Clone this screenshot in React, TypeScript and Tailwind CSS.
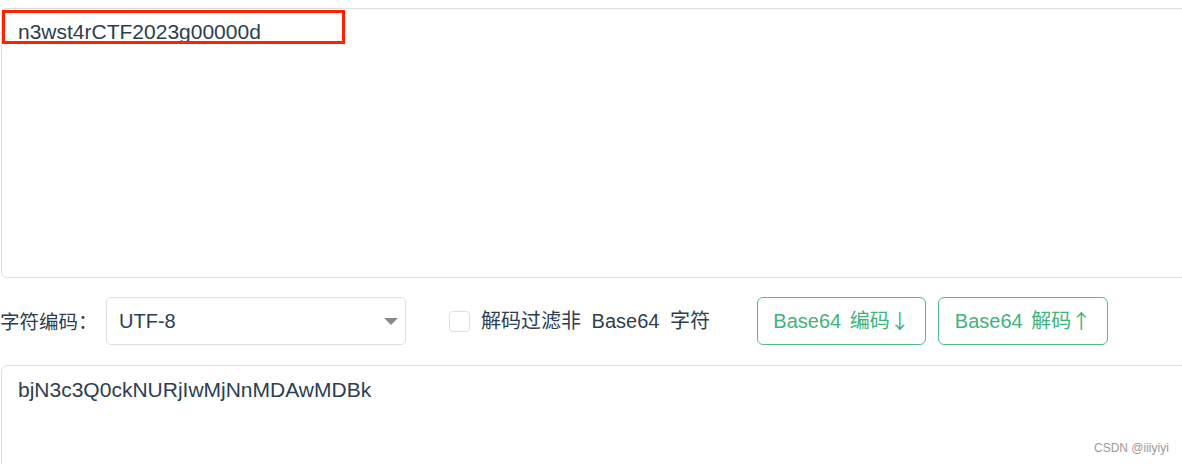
import React from "react";

export default function App() {
  const sans = { fontFamily: '"Liberation Sans", Arial, "Noto Sans CJK SC", sans-serif' };
  const cjk = { fontFamily: '"Noto Sans CJK SC", "Liberation Sans", sans-serif' };
  return (
    <div className="relative w-[1182px] h-[464px] overflow-hidden bg-white text-[#2c3e50]" style={sans}>
      <div className="pt-[8px] pl-[1px]">
        <div className="relative w-[1240px] h-[270px] border border-[#dcdfe6] rounded-[6px] px-[16px] pt-[10px] text-[21px] leading-[26px]">
          n3wst4rCTF2023g00000d
        </div>
        <div className="flex items-center h-[48px] mt-[19px] -ml-[1px]">
          <span className="text-[19.5px] w-[106px] whitespace-nowrap" style={cjk}>字符编码：</span>
          <div className="relative w-[300px] h-[48px] border border-[#dcdfe6] rounded-[5px] flex items-center pl-[12px] text-[20px]">
            UTF-8
            <svg className="absolute left-[277px] top-[20px]" width="14" height="8" viewBox="0 0 14 8">
              <path d="M0 0 L14 0 L7 7 Z" fill="#8a8a8a" />
            </svg>
          </div>
          <div className="ml-[43px] w-[21px] h-[21px] border border-[#dcdfe6] rounded-[4px]" />
          <span className="ml-[11px] w-[276px] text-[20px] whitespace-nowrap [word-spacing:5px]">解码过滤非 Base64 字符</span>
          <div className="w-[169px] h-[48px] border border-[#52bd8a] rounded-[6px] flex items-center justify-center text-[20px] text-[#3eb37c] whitespace-nowrap [word-spacing:3px]">
            Base64 编码<span style={cjk}>↓</span>
          </div>
          <div className="ml-[12px] w-[170px] h-[48px] border border-[#52bd8a] rounded-[6px] flex items-center justify-center text-[20px] text-[#3eb37c] whitespace-nowrap [word-spacing:3px]">
            Base64 解码<span style={cjk}>↑</span>
          </div>
        </div>
        <div className="w-[1240px] h-[200px] mt-[20px] border border-[#dcdfe6] rounded-[6px] px-[16px] pt-[11px] text-[21px] leading-[26px]">
          bjN3c3Q0ckNURjIwMjNnMDAwMDBk
        </div>
      </div>
      <div className="absolute left-[2px] top-[10px] w-[343px] h-[34px] border-[3px] border-[#ff2200]" />
      <div className="absolute left-[1094px] top-[439px] text-[12px] text-[#999999]" style={{ fontFamily: '"Liberation Sans", Arial, sans-serif' }}>
        CSDN @iiiyiyi
      </div>
    </div>
  );
}
